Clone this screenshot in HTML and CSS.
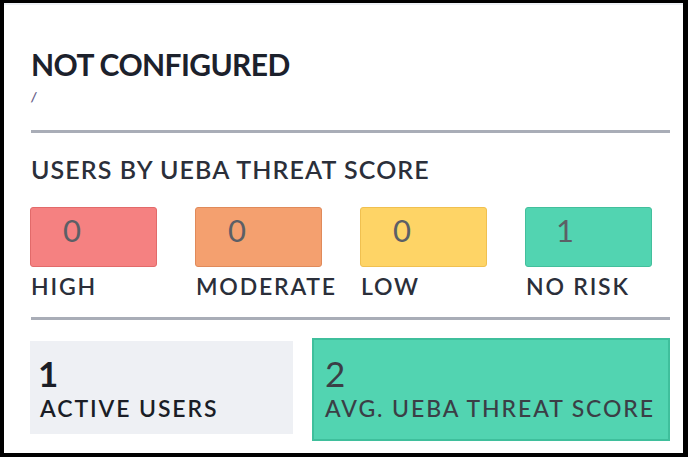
FILE: index.html
```html
<!DOCTYPE html>
<html>
<head>
<meta charset="utf-8">
<link rel="stylesheet" href="styles.css">
</head>
<body>
<div class="frame">
  <div class="title">NOT CONFIGURED</div>
  <div class="tick">/</div>
  <div class="rule"></div>
  <div class="subtitle">USERS BY UEBA THREAT SCORE</div>
  <div class="scores">
    <div class="score">
      <div class="chip chip-high">0</div>
      <div class="label">HIGH</div>
    </div>
    <div class="score">
      <div class="chip chip-mod">0</div>
      <div class="label">MODERATE</div>
    </div>
    <div class="score">
      <div class="chip chip-low">0</div>
      <div class="label">LOW</div>
    </div>
    <div class="score">
      <div class="chip chip-none">1</div>
      <div class="label">NO RISK</div>
    </div>
  </div>
  <div class="rule rule-2"></div>
  <div class="stats">
    <div class="stat stat-users">
      <div class="stat-num">1</div>
      <div class="stat-label">ACTIVE USERS</div>
    </div>
    <div class="stat stat-avg">
      <div class="stat-num">2</div>
      <div class="stat-label">AVG. UEBA THREAT SCORE</div>
    </div>
  </div>
</div>
</body>
</html>
```
FILE: styles.css
```css
html, body {
  margin: 0;
  padding: 0;
  background: #ffffff;
}
.frame {
  width: 688px;
  height: 457px;
  box-sizing: border-box;
  border-style: solid;
  border-color: #000000;
  border-width: 3px 5px 4px 4px;
  padding: 0 13px 0 26px;
  font-family: "Lato", "Liberation Sans", sans-serif;
  color: #2b2f3a;
  background: #ffffff;
  box-shadow: inset 0 2px 0 #eef1f6;
}
.title {
  margin-top: 43px;
  padding-left: 1px;
  font-size: 30px;
  line-height: 36px;
  font-weight: 700;
  color: #1c212c;
  letter-spacing: -0.6px;
}
.tick {
  margin-top: 8px;
  font-size: 13px;
  line-height: 14px;
  height: 14px;
  padding-left: 1px;
  color: #6a5f8a;
  font-style: italic;
  font-weight: 700;
}
.rule {
  height: 3px;
  background: #a9adb7;
  margin-top: 26px;
  margin-left: 1px;
}
.rule:first-of-type {
  margin-top: 24px;
}
.subtitle {
  margin-top: 21px;
  padding-left: 1px;
  font-size: 25px;
  line-height: 30px;
  font-weight: 600;
  color: #2b2f3a;
  letter-spacing: 1.1px;
}
.scores {
  display: grid;
  grid-template-columns: repeat(4, 127px);
  column-gap: 38px;
  margin-top: 23px;
}
.chip {
  height: 60px;
  box-sizing: border-box;
  border-radius: 3px;
  border: 1px solid;
  padding-left: 32px;
  padding-top: 5px;
  font-size: 31px;
  line-height: 34px;
  color: #5c5f66;
}
.chip-high { background: #f58181; border-color: #e26a6a; }
.chip-mod { background: #f4a06f; border-color: #e08a5a; }
.chip-low { background: #fed466; border-color: #f0c050; }
.chip-none { background: #52d4b1; border-color: #43bf9c; padding-left: 30px; }
.label {
  margin-top: 5px;
  padding-left: 1px;
  font-size: 23px;
  line-height: 28px;
  font-weight: 600;
  color: #2b2f3a;
  letter-spacing: 1.8px;
}
.rule-2 {
  margin-top: 17px;
}
.stats {
  display: flex;
  align-items: flex-start;
  gap: 19px;
  margin-top: 18px;
}
.stat {
  box-sizing: border-box;
}
.stat-users {
  width: 263px;
  height: 93px;
  margin-top: 3px;
  background: #eef0f4;
  padding: 14px 0 0 8px;
  color: #1a1d26;
}
.stat-avg {
  flex: 1;
  height: 103px;
  background: #52d4b1;
  border: 2px solid #3fbf9c;
  padding: 15px 0 0 11px;
  color: #3b3e46;
}
.stat-num {
  font-size: 35px;
  line-height: 36px;
}
.stat-users .stat-num {
  font-weight: 700;
}
.stat-label {
  margin-top: 3px;
  font-size: 23px;
  line-height: 28px;
  font-weight: 600;
  letter-spacing: 1.9px;
}
.stat-users .stat-label {
  padding-left: 2px;
}
.stat-avg .stat-label {
  font-weight: 500;
}
```
